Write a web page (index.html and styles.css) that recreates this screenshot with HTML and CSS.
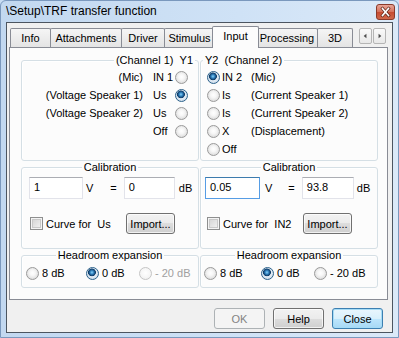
FILE: index.html
```html
<!DOCTYPE html>
<html>
<head>
<meta charset="utf-8">
<link rel="stylesheet" href="styles.css">
</head>
<body>
<div class="window">
  <div class="titlebar">
    <span class="title">\Setup\TRF transfer function</span>
    <span class="close-x">
      <svg width="19" height="16" viewBox="0 0 19 16">
        <defs>
          <linearGradient id="cg" x1="0" y1="0" x2="0" y2="1">
            <stop offset="0" stop-color="#e9a99b"/>
            <stop offset="0.5" stop-color="#d5705a"/>
            <stop offset="0.5" stop-color="#c64a30"/>
            <stop offset="1" stop-color="#d06a4c"/>
          </linearGradient>
        </defs>
        <rect x="0.5" y="0.5" width="18" height="15" rx="2.5" fill="url(#cg)" stroke="#8a3a2a"/>
        <path d="M6.5 4.5 L12.5 11.5 M12.5 4.5 L6.5 11.5" stroke="#5a2418" stroke-width="3" stroke-linecap="square"/>
        <path d="M6.5 4.5 L12.5 11.5 M12.5 4.5 L6.5 11.5" stroke="#ffffff" stroke-width="1.6" stroke-linecap="square"/>
      </svg>
    </span>
  </div>
  <div class="client">
    <div class="tabstrip">
      <div class="tab w-info">Info</div>
      <div class="tab w-att">Attachments</div>
      <div class="tab w-drv">Driver</div>
      <div class="tab w-stim">Stimulus</div>
      <div class="tab active w-inp">Input</div>
      <div class="tab w-proc">Processing</div>
      <div class="tab w-3d">3D</div>
      <div class="spin">
        <span class="spin-btn"><svg width="12" height="14" viewBox="0 0 12 14"><path d="M7 4.5 L4 7 L7 9.5 Z" fill="#4d4d4d"/></svg></span>
        <span class="spin-btn"><svg width="12" height="14" viewBox="0 0 12 14"><path d="M5 4.5 L8 7 L5 9.5 Z" fill="#4d4d4d"/></svg></span>
      </div>
    </div>
    <div class="page">
      <div class="cols">
        <div class="group ch1">
          <div class="legend right">(Channel 1)&nbsp;&nbsp;Y1</div>
          <div class="lrow"><span class="desc">(Mic)</span><span class="lab">IN 1</span><span class="radio"></span></div>
          <div class="lrow"><span class="desc">(Voltage Speaker 1)</span><span class="lab">Us</span><span class="radio on"></span></div>
          <div class="lrow"><span class="desc">(Voltage Speaker 2)</span><span class="lab">Us</span><span class="radio"></span></div>
          <div class="lrow"><span class="desc"></span><span class="lab">Off</span><span class="radio"></span></div>
        </div>
        <div class="group ch2">
          <div class="legend left">Y2&nbsp;&nbsp;(Channel 2)</div>
          <div class="rrow"><span class="radio on"></span><span class="lab">IN 2</span><span class="desc">(Mic)</span></div>
          <div class="rrow"><span class="radio"></span><span class="lab">Is</span><span class="desc">(Current Speaker 1)</span></div>
          <div class="rrow"><span class="radio"></span><span class="lab">Is</span><span class="desc">(Current Speaker 2)</span></div>
          <div class="rrow"><span class="radio"></span><span class="lab">X</span><span class="desc">(Displacement)</span></div>
          <div class="rrow"><span class="radio"></span><span class="lab">Off</span><span class="desc"></span></div>
        </div>
      </div>
      <div class="cols gap6">
        <div class="group calib cal-l">
          <div class="legend center">Calibration</div>
          <div class="calrow">
            <span class="edit e1">1</span>
            <span class="unit-v">V</span>
            <span class="eq">=</span>
            <span class="edit e2">0</span>
            <span class="unit-db">dB</span>
          </div>
          <div class="currow">
            <span class="check"></span>
            <span class="curlab">Curve for&nbsp;&nbsp;Us</span>
            <span class="btn import">Import...</span>
          </div>
        </div>
        <div class="group calib cal-r">
          <div class="legend center">Calibration</div>
          <div class="calrow">
            <span class="edit e1 focus">0.05</span>
            <span class="unit-v">V</span>
            <span class="eq">=</span>
            <span class="edit e2">93.8</span>
            <span class="unit-db">dB</span>
          </div>
          <div class="currow">
            <span class="check"></span>
            <span class="curlab">Curve for&nbsp;&nbsp;IN2</span>
            <span class="btn import">Import...</span>
          </div>
        </div>
      </div>
      <div class="cols gap6">
        <div class="group head hd-l">
          <div class="legend center">Headroom expansion</div>
          <div class="hrow">
            <span class="hitem i1"><span class="radio"></span><span>8 dB</span></span>
            <span class="hitem i2"><span class="radio on"></span><span>0 dB</span></span>
            <span class="hitem dis"><span class="radio off"></span><span>- 20 dB</span></span>
          </div>
        </div>
        <div class="group head hd-r">
          <div class="legend center">Headroom expansion</div>
          <div class="hrow">
            <span class="hitem i1"><span class="radio"></span><span>8 dB</span></span>
            <span class="hitem i2"><span class="radio on"></span><span>0 dB</span></span>
            <span class="hitem"><span class="radio"></span><span>- 20 dB</span></span>
          </div>
        </div>
      </div>
    </div>
    <div class="actions">
      <span class="btn big disabled">OK</span>
      <span class="btn big">Help</span>
      <span class="btn big default">Close</span>
    </div>
  </div>
</div>
</body>
</html>
```

FILE: styles.css
```css
* { box-sizing: border-box; }
html, body { margin: 0; padding: 0; }
body {
  width: 399px;
  height: 338px;
  overflow: hidden;
  font-family: "Liberation Sans", Arial, sans-serif;
  font-size: 11px;
  color: #000;
  background: #c9ddf3;
}

.window {
  width: 399px;
  height: 338px;
  display: flex;
  flex-direction: column;
  border: 1px solid #7a98bd;
  border-radius: 6px 6px 0 0;
  background: linear-gradient(to right, #c2d8f0 0%, #cfe2f6 60%, #dbe9f8 100%);
}

.titlebar {
  height: 21px;
  flex: none;
  display: flex;
  align-items: flex-start;
  padding-left: 5px;
}
.title {
  font-size: 12px;
  line-height: 21px;
  color: #000;
  flex: 1;
  white-space: nowrap;
}
.close-x {
  width: 19px;
  height: 16px;
  margin-top: 3px;
  margin-right: 3px;
  display: block;
}
.close-x svg { display: block; }

.client {
  flex: 1;
  margin: 0 5px 4px 5px;
  border: 1px solid #4c5560;
  background: #f0f0f0;
  padding: 3px 4px 0 2px;
  display: flex;
  flex-direction: column;
}

/* tabs */
.tabstrip {
  height: 22px;
  margin-bottom: -1px;
  display: flex;
  align-items: flex-end;
  padding-left: 1px;
  position: relative;
  z-index: 1;
}
.tab {
  height: 19px;
  margin-bottom: 1px;
  border: 1px solid #898c95;
  border-bottom: none;
  margin-right: -1px;
  border-radius: 2px 2px 0 0;
  background: linear-gradient(#f5f5f5, #e4e4e4);
  text-align: center;
  line-height: 19px;
  white-space: nowrap;
  overflow: hidden;
}
.tab.active {
  height: 22px;
  margin-bottom: 0;
  margin-left: -2px;
  margin-right: -3px;
  background: #fcfcfc;
  line-height: 18px;
  position: relative;
  z-index: 2;
}
.w-info { width: 41px; }
.w-att { width: 72px; }
.w-drv { width: 44px; }
.w-stim { width: 51px; }
.w-inp { width: 47px; }
.w-proc { width: 62px; }
.w-3d { width: 36px; }

.spin {
  margin-left: auto;
  margin-right: 2px;
  align-self: flex-start;
  margin-top: 2px;
  display: flex;
  gap: 1px;
}
.spin-btn {
  width: 13px;
  height: 16px;
  border: 1px solid #b5b5b5;
  border-radius: 2px;
  background: linear-gradient(#fafafa, #e8e8e8);
  display: flex;
  align-items: center;
  justify-content: center;
}

.page {
  height: 253px;
  flex: none;
  border: 1px solid #898c95;
  background: #fcfcfc;
  padding: 12px 0 0 11px;
}

.cols {
  display: grid;
  grid-template-columns: 178px 178px;
  column-gap: 1px;
}
.gap6 { margin-top: 6px; }

.group {
  border: 1px solid #d5dfe5;
  border-radius: 3px;
  box-shadow: inset 1px 1px 0 #fff;
}
.legend {
  width: max-content;
  height: 13px;
  line-height: 13px;
  margin-top: -7px;
  margin-bottom: 1px;
  padding: 0 2px;
  background: #fcfcfc;
  white-space: nowrap;
}
.legend.right { margin-left: auto; margin-right: 3px; }
.legend.left { margin-left: 2px; }
.legend.center { margin-left: auto; margin-right: auto; }

.ch1, .ch2 { padding-bottom: 2px; }

.lrow {
  height: 18px;
  display: grid;
  grid-template-columns: 1fr 22px 13px;
  align-items: center;
  padding-right: 10px;
  white-space: nowrap;
}
.lrow .desc { text-align: right; padding-right: 10px; }

.rrow {
  height: 18px;
  display: grid;
  grid-template-columns: 13px 27px 1fr;
  column-gap: 2px;
  align-items: center;
  padding-left: 6px;
  white-space: nowrap;
}

.radio {
  width: 13px;
  height: 13px;
  border-radius: 50%;
  border: 1px solid #9a9a9a;
  background: radial-gradient(circle at 50% 45%, #ffffff 0, #f6f6f6 35%, #dedede 75%, #cfcfcf 100%);
  display: block;
  flex: none;
}
.radio.on {
  border-color: #2c628b;
  background:
    radial-gradient(circle at 45% 40%, #8fd0f5 0, #3f95cf 1.4px, #1e5c93 2.6px, #0d3b66 3.6px, rgba(13,59,102,0) 4.2px),
    radial-gradient(circle at 50% 45%, #ffffff 0, #eef4fa 35%, #c9d9e8 80%, #b8cadb 100%);
}
.radio.off {
  border-color: #c5c5c5;
  background: radial-gradient(circle at 50% 45%, #ffffff 0, #f7f7f7 50%, #ebebeb 100%);
}

.calib { padding-bottom: 14px; }
.calrow {
  display: flex;
  align-items: center;
  height: 22px;
  margin-top: 3px;
}
.edit {
  height: 22px;
  border: 1px solid #e2e3ea;
  border-top-color: #abadb3;
  background: #fff;
  line-height: 19px;
  padding-left: 4px;
  display: block;
}
.edit.focus {
  border-color: #569de5;
  border-top-color: #3d7bad;
}
.cal-l .calrow { padding-left: 7px; }
.cal-l .e1 { width: 54px; }
.cal-l .unit-v { margin-left: 3px; }
.cal-l .eq { margin-left: 17px; }
.cal-l .e2 { width: 51px; margin-left: 7px; }
.cal-l .unit-db { margin-left: 4px; }

.cal-r .calrow { padding-left: 4px; }
.cal-r .e1 { width: 55px; }
.cal-r .unit-v { margin-left: 5px; }
.cal-r .eq { margin-left: 16px; }
.cal-r .e2 { width: 52px; margin-left: 7px; }
.cal-r .unit-db { margin-left: 3px; }

.currow {
  display: flex;
  align-items: center;
  height: 21px;
  margin-top: 14px;
}
.cal-l .currow { padding-left: 8px; }
.cal-r .currow { padding-left: 6px; }
.check {
  width: 13px;
  height: 13px;
  border: 1px solid #8e8f8f;
  background: linear-gradient(135deg, #d0d0d0, #f6f6f6);
  box-shadow: inset 0 0 0 1px #f4f4f4, inset 0 0 0 2px #c9c9c9;
  display: block;
  flex: none;
}
.curlab {
  width: 83px;
  padding-left: 3px;
  white-space: nowrap;
}

.btn {
  display: flex;
  align-items: center;
  justify-content: center;
  border: 1px solid #707070;
  border-radius: 3px;
  background: linear-gradient(#f2f2f2 0%, #ebebeb 50%, #dddddd 50%, #cfcfcf 100%);
  box-shadow: inset 0 0 0 1px rgba(255,255,255,0.7);
  white-space: nowrap;
}
.import { width: 49px; height: 21px; }

.head { padding-bottom: 5px; }
.hrow {
  display: flex;
  align-items: center;
  height: 18px;
  margin-top: 2px;
}
.hd-l .hrow { padding-left: 4px; }
.hd-r .hrow { padding-left: 3px; }
.hitem {
  display: flex;
  align-items: center;
  gap: 3px;
  white-space: nowrap;
}
.hd-l .i1 { width: 60px; }
.hd-r .i1 { width: 57px; }
.i2 { width: 53px; }
.hitem.dis { color: #a0a0a0; }

.actions {
  display: flex;
  justify-content: flex-end;
  gap: 8px;
  margin-top: 8px;
  padding-right: 5px;
}
.big { width: 51px; height: 21px; }
.btn.disabled {
  border-color: #adb2b5;
  background: #f4f4f4;
  box-shadow: none;
  color: #838383;
}
.btn.default {
  border-color: #3c7fb1;
  background: linear-gradient(#eaf6fd 0%, #d9f0fc 50%, #bee6fd 50%, #a7d9f5 100%);
  box-shadow: inset 0 0 0 1px #a6dcf6;
}
```
